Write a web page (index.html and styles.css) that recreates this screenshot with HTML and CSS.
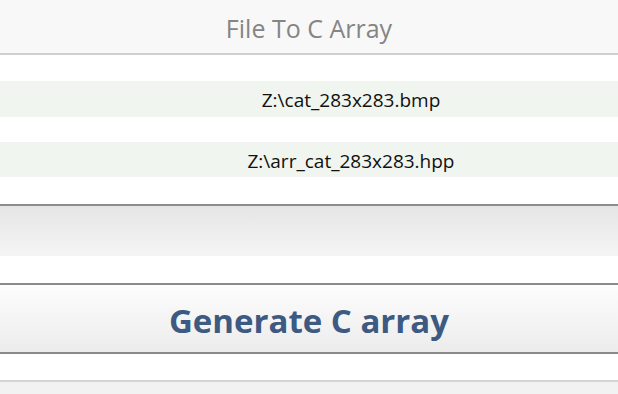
FILE: index.html
```html
<!DOCTYPE html>
<html lang="en">
<head>
    <meta charset="UTF-8">
    <meta name="viewport" content="width=device-width, initial-scale=1.0">
    <title>File To C Array</title>
    <link rel="stylesheet" href="styles.css">
</head>
<body>
    <div class="cabecalho">
        <h1>File To C Array</h1>
    </div>

    <div class="conteudo">
        <input class="caminho" type="text" value="Z:\cat_283x283.bmp">
        <input class="caminho segundo" type="text" value="Z:\arr_cat_283x283.hpp">

        <div class="barra"></div>

        <button class="gerar">Generate C array</button>

        <div class="rodape"></div>
    </div>
</body>
</html>
```

FILE: styles.css
```css
body {
    font-family: 'Open Sans', 'Liberation Sans', sans-serif;
    margin: 0;
    padding: 0;
    background: #ffffff;
    overflow: hidden;
}

.cabecalho {
    height: 53px;
    background-color: #f8f8f8;
    border-bottom: 2px solid #cfcfcf;
    display: flex;
    align-items: center;
    justify-content: center;
}

.cabecalho h1 {
    margin: 2px 0 0 0;
    font-size: 25px;
    font-weight: normal;
    color: #858585;
}

.conteudo {
    display: flex;
    flex-direction: column;
    gap: 26px;
    padding-top: 26px;
}

.caminho {
    display: block;
    width: 100%;
    height: 36px;
    box-sizing: border-box;
    margin: 0;
    padding: 2px 0 0 84px;
    border: none;
    outline: none;
    background-color: #f0f5ef;
    font-family: 'Open Sans', sans-serif;
    font-size: 19px;
    color: #111111;
    text-align: center;
}

.caminho.segundo {
    height: 35px;
    margin-top: -1px;
}

.barra {
    height: 50px;
    margin-top: 1px;
    border-top: 2px solid #8c8c8c;
    background: linear-gradient(to bottom, #e5e5e5, #f5f5f5);
}

.gerar {
    display: block;
    width: 100%;
    height: 71px;
    margin: 1px 0 0 0;
    padding: 4px 0 0 0;
    border: none;
    border-top: 2px solid #8a8a8a;
    border-bottom: 2px solid #8a8a8a;
    background: linear-gradient(to bottom, #fdfdfd, #ececec);
    font-family: 'Open Sans', sans-serif;
    font-size: 33px;
    font-weight: bold;
    color: #3c5a82;
    cursor: pointer;
}

.rodape {
    height: 40px;
    border-top: 2px solid #d4d4d4;
    background-color: #f2f2f2;
}
```
